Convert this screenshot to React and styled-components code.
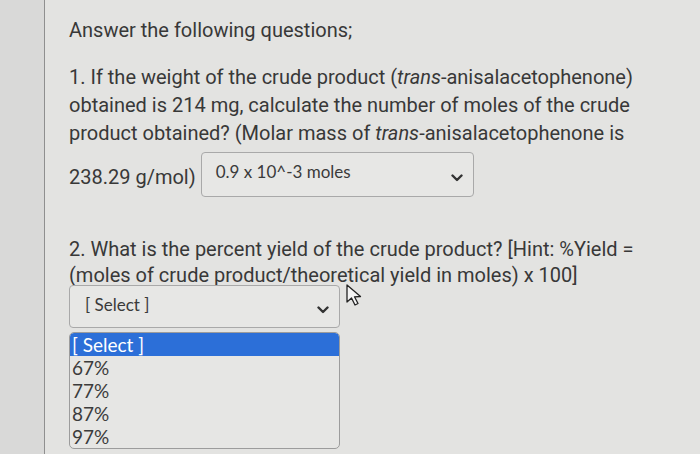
import React from 'react';
import styled, { createGlobalStyle } from 'styled-components';

const GlobalStyle = createGlobalStyle`
  html, body {
    margin: 0;
    padding: 0;
    background: #e3e3e1;
    overflow: hidden;
  }
`;

const Page = styled.div`
  display: flex;
  width: 700px;
  height: 454px;
  background: #e3e3e1;
`;

const SideStrip = styled.div`
  width: 44px;
  flex: none;
  background: #d9d9d8;
  border-right: 1px solid #8f8f8f;
`;

const Content = styled.div`
  position: relative;
  flex: 1;
  padding: 16px 0 0 24px;
  font-family: Roboto, "Liberation Sans", sans-serif;
  font-size: 20px;
  line-height: 28px;
  color: #383838;
`;

const Heading = styled.p`
  margin: 0;
`;

const Question = styled.p`
  margin: ${p => p.$top}px 0 0;
  width: 590px;
  line-height: ${p => p.$lh || 28}px;
`;

const AnswerRow = styled.div`
  display: flex;
  align-items: center;
  gap: 5px;
  margin-top: 5px;
`;

const SelectBox = styled.div`
  position: relative;
  display: flex;
  align-items: center;
  justify-content: space-between;
  box-sizing: border-box;
  width: ${p => p.$w}px;
  height: ${p => p.$h}px;
  padding: 0 10px 0 ${p => p.$pl}px;
  border: 1px solid #a9a9a9;
  border-radius: 4px;
  background: #e7e7e5;
  font-family: Lato, "Open Sans", sans-serif;
  font-size: ${p => p.$fs}px;
  color: #3a3a3a;
`;

const SelectText = styled.span`
  position: relative;
  top: ${p => p.$dy || 0}px;
`;

const Chevron = () => (
  <svg width="12" height="8" viewBox="0 0 12 8" style={{ marginTop: 6 }}>
    <path d="M1.5 1.5 L6 6 L10.5 1.5" fill="none" stroke="#333" strokeWidth="2.4" strokeLinecap="round" strokeLinejoin="round" />
  </svg>
);

const SecondBlock = styled.div`
  position: relative;
  margin-top: -3px;
`;

const Dropdown = styled.ul`
  position: absolute;
  left: 0;
  top: 47px;
  box-sizing: border-box;
  width: 271px;
  margin: 0;
  padding: 0;
  list-style: none;
  border: 1px solid #9c9c9c;
  border-radius: 5px;
  background: #e6e6e4;
  font-family: Lato, "Open Sans", sans-serif;
  font-size: 19px;
  color: #3c3c3c;
  overflow: hidden;
`;

const Option = styled.li`
  height: 23px;
  line-height: 23px;
  padding-left: 2px;
  background: ${p => (p.$active ? '#2c6fd8' : 'transparent')};
  color: ${p => (p.$active ? '#ffffff' : '#3c3c3c')};
  border-radius: ${p => (p.$active ? '4px 4px 0 0' : '0')};
`;

const Cursor = styled.svg`
  position: absolute;
  left: 276px;
  top: -2px;
`;

const options = ['[ Select ]', '67%', '77%', '87%', '97%'];

export default function App() {
  return (
    <Page>
      <GlobalStyle />
      <SideStrip />
      <Content>
        <Heading>Answer the following questions;</Heading>
        <Question $top={19}>
          1. If the weight of the crude product (<i>trans</i>-anisalacetophenone) obtained is 214 mg, calculate the number of moles of the crude product obtained? (Molar mass of <i>trans</i>-anisalacetophenone is
        </Question>
        <AnswerRow>
          <span style={{ marginTop: 5 }}>238.29 g/mol)</span>
          <SelectBox $w={273} $h={45} $pl={14} $fs={17}>
            <SelectText $dy={-3}>0.9 x 10^-3 moles</SelectText>
            <Chevron />
          </SelectBox>
        </AnswerRow>
        <Question $top={39} $lh={26}>
          2. What is the percent yield of the crude product? [Hint: %Yield = (moles of crude product/theoretical yield in moles) x 100]
        </Question>
        <SecondBlock>
          <SelectBox $w={271} $h={43} $pl={15} $fs={17}>
            <SelectText $dy={-2}>[ Select ]</SelectText>
            <Chevron />
          </SelectBox>
          <Dropdown>
            {options.map((o, i) => (
              <Option key={o} $active={i === 0}>{o}</Option>
            ))}
          </Dropdown>
          <Cursor width="18" height="24" viewBox="0 0 18 24">
            <path d="M2 2 L2 19 L6.5 15 L10 22 L13 20.5 L9.5 13.8 L15.5 13.5 Z" fill="#f4f4f4" stroke="#222" strokeWidth="1.3" strokeLinejoin="round" />
          </Cursor>
        </SecondBlock>
      </Content>
    </Page>
  );
}
